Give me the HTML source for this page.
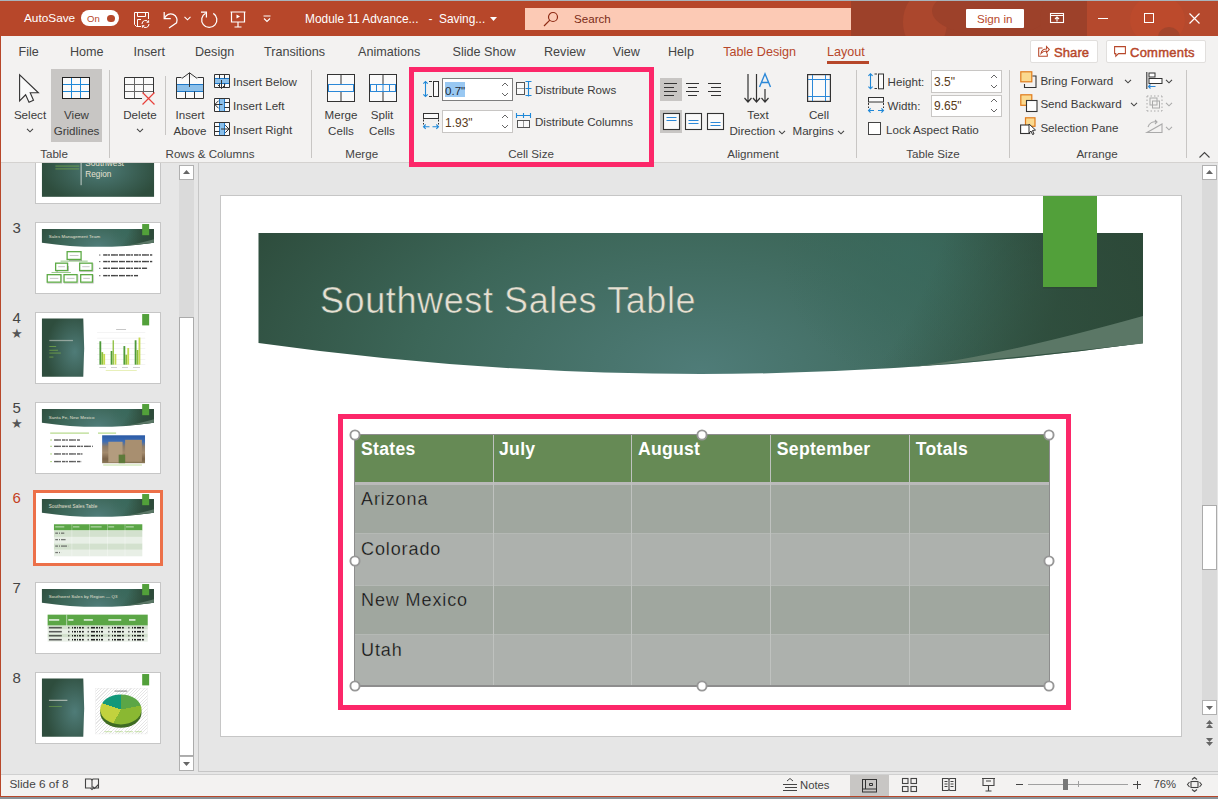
<!DOCTYPE html>
<html><head><meta charset="utf-8">
<style>
*{box-sizing:border-box;margin:0;padding:0}
html,body{width:1218px;height:799px;overflow:hidden;background:#E6E6E6;font-family:"Liberation Sans",sans-serif;color:#444}
.a{position:absolute}
.t{position:absolute;white-space:nowrap;line-height:1}
svg{position:absolute;overflow:visible}
#titlebar{left:0;top:0;width:1218px;height:36px;background:#B7472A;overflow:hidden}
#tabs{left:0;top:36px;width:1218px;height:127px;background:#F3F2F1;border-bottom:1px solid #D4D2D0}
.tab{font-size:12.8px;color:#444;top:45px}
.rb{font-size:12px;color:#3b3b3b}
.gl{font-size:12px;color:#555;top:148px}
.sep{position:absolute;width:1px;background:#C8C6C4}
.spin{position:absolute;background:#fff;border:1px solid #C8C6C4}
</style></head><body>
<div class="a" style="left:0;top:0;width:1218px;height:1px;background:#A8B4BC;z-index:5"></div>
<div id="titlebar" class="a">
<div class="t" style="left:24px;top:13px;font-size:11.8px;color:#fff">AutoSave</div>
<div class="a" style="left:81px;top:10px;width:38px;height:16px;border-radius:8px;background:#fff"></div>
<div class="t" style="left:87px;top:13.5px;font-size:9.5px;color:#B7472A">On</div>
<div class="a" style="left:107.3px;top:14.6px;width:7.4px;height:7.4px;border-radius:50%;background:#B7472A"></div>
<!-- save icon -->
<svg style="left:134px;top:12px" width="17" height="17" viewBox="0 0 17 17" fill="none" stroke="#fff" stroke-width="1">
<path d="M7 14.5H2.5L0.5 12.5V0.5H14.5V7"/><path d="M3.5 0.5V4.5H11.5V0.5"/><path d="M3.5 14V7.5H7"/>
<path d="M8 12A3.5 3.5 0 0 1 14.6 10.3M15 12A3.5 3.5 0 0 1 8.4 13.7"/><path d="M14.6 8.3V10.3H12.6M8.4 15.7V13.7H10.4"/>
</svg>
<!-- undo -->
<svg style="left:163px;top:11px" width="17" height="18" viewBox="0 0 17 18" fill="none" stroke="#fff" stroke-width="1.25">
<path d="M1.2 0.9V7.5H7.8"/><path d="M1.8 6.8A5.9 5.9 0 0 1 13.6 11.8L6 17"/>
</svg>
<svg style="left:184px;top:16px" width="7" height="5" viewBox="0 0 7 5" fill="none" stroke="#fff" stroke-width="1.1"><path d="M0.5 0.8l3 3 3-3"/></svg>
<!-- redo -->
<svg style="left:199px;top:11px" width="19" height="19" viewBox="0 0 19 19" fill="none" stroke="#fff" stroke-width="1.25">
<path d="M14.3 2.4A7.6 7.6 0 1 1 6.6 2.2"/><path d="M2 1.2H7.4V6.6"/>
</svg>
<!-- present -->
<svg style="left:230px;top:11px" width="16" height="17" viewBox="0 0 16 17" fill="none" stroke="#fff" stroke-width="1.2">
<path d="M0.5 1h15M1.5 1v10h13V1M8 11v5M4.5 16h7"/><path d="M6.5 3.5l3.5 2-3.5 2z" fill="#fff" stroke="none"/>
</svg>
<!-- customize -->
<svg style="left:263px;top:15px" width="8" height="8" viewBox="0 0 8 8" fill="none" stroke="#fff" stroke-width="1.1"><path d="M0.5 1h7M1 3.5l3 3 3-3"/></svg>
<div class="t" style="left:305px;top:13.5px;font-size:11.9px;color:#fff">Module 11 Advance...&nbsp;&nbsp;&nbsp;-&nbsp;&nbsp;Saving...</div>
<svg style="left:490px;top:17px" width="7" height="4" viewBox="0 0 7 4"><path d="M0 0h7L3.5 4z" fill="#fff"/></svg>
<!-- pattern -->
<div class="a" style="left:851px;top:0;width:236px;height:36px;background:#9D412A"></div>
<div class="a" style="left:903px;top:-8px;width:44px;height:60px;border-radius:50%;background:#AB472D"></div>
<div class="a" style="left:932px;top:-14px;width:120px;height:50px;border-radius:50%;background:#9D412A"></div>
<div class="a" style="left:1040px;top:-10px;width:50px;height:60px;border-radius:50%;background:#9D412A"></div>
<div class="a" style="left:1087px;top:0;width:131px;height:36px;background:#B5492D"></div>
<div class="a" style="left:1130px;top:-5px;width:55px;height:50px;border-radius:50%;background:#BC4A2C"></div>
<div class="a" style="left:1158px;top:27px;width:22px;height:20px;border-radius:50%;background:#A3452C"></div>
<!-- search -->
<div class="a" style="left:525px;top:8px;width:326px;height:22px;background:#FCCAB5"></div>
<svg style="left:543px;top:11px" width="16" height="16" viewBox="0 0 16 16" fill="none" stroke="#8E2B15" stroke-width="1.2">
<circle cx="10" cy="6" r="4.5"/><path d="M6.8 9.2L1 15"/>
</svg>
<div class="t" style="left:574px;top:13px;font-size:11.6px;color:#7A2A17">Search</div>
<!-- sign in -->
<div class="a" style="left:966px;top:9px;width:58px;height:19px;background:#fff;border-radius:1px"></div>
<div class="t" style="left:977px;top:12.5px;font-size:11.6px;color:#B7472A">Sign in</div>
<svg style="left:1050px;top:13px" width="14" height="10" viewBox="0 0 14 10" fill="none" stroke="#fff" stroke-width="1.1">
<rect x="0.5" y="0.5" width="13" height="9"/><path d="M0.5 2.5h13M7 8.5V4M5 6l2-2 2 2"/>
</svg>
<div class="a" style="left:1098px;top:18px;width:10px;height:1px;background:#fff"></div>
<div class="a" style="left:1144px;top:13px;width:10px;height:10px;border:1px solid #fff"></div>
<svg style="left:1189px;top:13px" width="11" height="11" viewBox="0 0 11 11" stroke="#fff" stroke-width="1.2"><path d="M0.5 0.5l10 10M10.5 0.5l-10 10"/></svg>
</div>
<div id="tabs" class="a"></div>
<div id="ribbon">
<div class="t" style="left:18.5px;top:46.3px;font-size:12.6px;color:#444;">File</div>
<div class="t" style="left:70px;top:46.3px;font-size:12.6px;color:#444;">Home</div>
<div class="t" style="left:133.5px;top:46.3px;font-size:12.6px;color:#444;">Insert</div>
<div class="t" style="left:195px;top:46.3px;font-size:12.6px;color:#444;">Design</div>
<div class="t" style="left:264px;top:46.3px;font-size:12.6px;color:#444;">Transitions</div>
<div class="t" style="left:358px;top:46.3px;font-size:12.6px;color:#444;">Animations</div>
<div class="t" style="left:452.5px;top:46.3px;font-size:12.6px;color:#444;">Slide Show</div>
<div class="t" style="left:544px;top:46.3px;font-size:12.6px;color:#444;">Review</div>
<div class="t" style="left:612.8px;top:46.3px;font-size:12.6px;color:#444;">View</div>
<div class="t" style="left:668px;top:46.3px;font-size:12.6px;color:#444;">Help</div>
<div class="t" style="left:723.2px;top:46.3px;font-size:12.6px;color:#B7472A;">Table Design</div>
<div class="t" style="left:827px;top:46.3px;font-size:12.6px;color:#B7472A;">Layout</div>
<div class="a" style="left:827px;top:61px;width:42px;height:3px;background:#B7472A"></div>
<div class="a" style="left:1030px;top:39.5px;width:68px;height:23.5px;background:#fff;border:1px solid #E1DFDD;border-radius:2px"></div>
<svg style="left:1038px;top:45px" width="12" height="12" viewBox="0 0 12 12" fill="none" stroke="#B7472A" stroke-width="1.05"><path d="M4.5 3H0.7v8.3h8.6V8.5"/><path d="M3 8.5C3.5 5.5 5.5 4 8.5 4V1.5L11.3 4.6 8.5 7.7V6C6 6 4.5 6.8 3 8.5z"/></svg>
<div class="t" style="left:1054px;top:45.6px;font-size:13px;color:#B7472A;-webkit-text-stroke:0.45px #B7472A;letter-spacing:0.1px">Share</div>
<div class="a" style="left:1106px;top:39.5px;width:100px;height:23.5px;background:#fff;border:1px solid #E1DFDD;border-radius:2px"></div>
<svg style="left:1114px;top:46px" width="12" height="11" viewBox="0 0 12 11" fill="none" stroke="#B7472A" stroke-width="1.05"><path d="M0.6 0.6h10.8v7H4.5L1.8 10.2V7.6H0.6z"/></svg>
<div class="t" style="left:1130px;top:45.6px;font-size:13px;color:#B7472A;-webkit-text-stroke:0.45px #B7472A;letter-spacing:0.25px">Comments</div>
<div class="a" style="left:51px;top:69px;width:51px;height:73px;background:#C8C6C4"></div>
<svg style="left:19px;top:74px" width="22" height="29" viewBox="0 0 22 29"><path d="M0.6 0.8V26.8L6.6 20.8 10 28.2 14.5 26.2 11.2 18.8H19.4z" fill="#fafafa" stroke="#333" stroke-width="1.1" stroke-linejoin="miter"/></svg>
<svg style="left:62px;top:77px" width="28" height="22" viewBox="0 0 28 22"><rect x="0.5" y="0.5" width="27" height="21" fill="#fafafa" stroke="#222" stroke-width="1"/><path d="M1 7.5h26M1 14.5h26M9.5 1v20M18.5 1v20" stroke="#1E88D8" stroke-width="1"/></svg>
<div class="t" style="left:-30px;width:120px;text-align:center;top:109.4px;font-size:11.6px;color:#3b3b3b;">Select</div>
<svg style="left:26px;top:128px" width="8" height="5" viewBox="0 0 8 5" fill="none" stroke="#444" stroke-width="1.1"><path d="M1 0.8l3 3 3-3"/></svg>
<div class="t" style="left:16.5px;width:120px;text-align:center;top:109.2px;font-size:11.6px;color:#3b3b3b;">View</div>
<div class="t" style="left:16.5px;width:120px;text-align:center;top:124.7px;font-size:11.6px;color:#3b3b3b;">Gridlines</div>
<div class="t" style="left:-6px;width:120px;text-align:center;top:147.7px;font-size:11.6px;color:#444;">Table</div>
<div class="sep" style="left:109px;top:70px;height:88px"></div>
<svg style="left:124px;top:77px" width="33" height="28" viewBox="0 0 33 28"><path d="M0.5 0.5h29v21h-29z" fill="#fafafa" stroke="#333" stroke-width="1"/><path d="M1 7.5h28M1 14.5h28M10.5 1v20M19.5 1v20" stroke="#666" stroke-width="1"/><path d="M18 16h12v8h-12z" fill="#F3F2F1"/><path d="M18.5 15.5l12 12M30.5 15.5l-12 12" stroke="#E8403A" stroke-width="1.2"/></svg>
<div class="t" style="left:80px;width:120px;text-align:center;top:108.8px;font-size:11.6px;color:#3b3b3b;">Delete</div>
<svg style="left:136px;top:128px" width="8" height="5" viewBox="0 0 8 5" fill="none" stroke="#444" stroke-width="1.1"><path d="M1 0.8l3 3 3-3"/></svg>
<div class="sep" style="left:165px;top:76px;height:59px"></div>
<svg style="left:176px;top:72px" width="29" height="28" viewBox="0 0 29 28"><rect x="0.5" y="5.5" width="27" height="21" fill="#fafafa"/><rect x="1" y="12.5" width="26" height="7" fill="#8CC0EA"/><path d="M0.5 12.5h27M0.5 19.5h27" stroke="#1E78C8" stroke-width="1"/><path d="M5.5 5.5H0.5V26.5H27.5V5.5H21.5M9.5 19.5v7M18.5 19.5v7" fill="none" stroke="#333" stroke-width="1"/><path d="M13.5 0.8V15M5.8 6.5L13.5 0.8 21.2 6.5" fill="none" stroke="#333" stroke-width="1"/></svg>
<div class="t" style="left:130px;width:120px;text-align:center;top:108.8px;font-size:11.6px;color:#3b3b3b;">Insert</div>
<div class="t" style="left:130px;width:120px;text-align:center;top:124.7px;font-size:11.6px;color:#3b3b3b;">Above</div>
<svg style="left:214px;top:74px" width="17" height="16" viewBox="0 0 17 16"><rect x="0.5" y="0.5" width="15" height="13" fill="#fafafa"/><rect x="1" y="4.5" width="14" height="5" fill="#8CC0EA"/><path d="M0.5 4.5h15M0.5 9.5h15" stroke="#1E78C8" stroke-width="1"/><path d="M0.5 0.5h15v13h-15zM5.5 0.5v4M10.5 0.5v4M5.5 9.5v4M10.5 9.5v4" fill="none" stroke="#333" stroke-width="1"/><path d="M7.5 6V14.5M3.8 10.8L7.5 14.5 11.2 10.8" fill="none" stroke="#333" stroke-width="1"/></svg>
<div class="t" style="left:233px;top:76.4px;font-size:11.6px;color:#3b3b3b;">Insert Below</div>
<svg style="left:214px;top:98px" width="17" height="15" viewBox="0 0 17 15"><rect x="0.5" y="0.5" width="15" height="13" fill="#fafafa"/><rect x="5.5" y="1" width="5" height="12" fill="#8CC0EA"/><path d="M5.5 0.5v13M10.5 0.5v13" stroke="#1E78C8" stroke-width="1"/><path d="M0.5 0.5h15v13h-15zM10.5 4.5h5M10.5 9.5h5" fill="none" stroke="#333" stroke-width="1"/><path d="M1 6.5H8.5M4.6 2.7L0.8 6.5 4.6 10.3" fill="none" stroke="#333" stroke-width="1"/></svg>
<div class="t" style="left:233px;top:100.2px;font-size:11.6px;color:#3b3b3b;">Insert Left</div>
<svg style="left:214px;top:122px" width="17" height="15" viewBox="0 0 17 15"><rect x="0.5" y="0.5" width="15" height="13" fill="#fafafa"/><rect x="5.5" y="1" width="5" height="12" fill="#8CC0EA"/><path d="M5.5 0.5v13M10.5 0.5v13" stroke="#1E78C8" stroke-width="1"/><path d="M0.5 0.5h15v13h-15zM0.5 4.5h5M0.5 9.5h5" fill="none" stroke="#333" stroke-width="1"/><path d="M7 7H15M11.2 3.2L15 7 11.2 10.8" fill="none" stroke="#333" stroke-width="1"/></svg>
<div class="t" style="left:233px;top:124.2px;font-size:11.6px;color:#3b3b3b;">Insert Right</div>
<div class="t" style="left:150px;width:120px;text-align:center;top:147.7px;font-size:11.6px;color:#444;">Rows &amp; Columns</div>
<div class="sep" style="left:311px;top:70px;height:88px"></div>
<svg style="left:327px;top:74px" width="28" height="28" viewBox="0 0 28 28"><rect x="0.5" y="0.5" width="27" height="27" fill="#fafafa" stroke="#333" stroke-width="1"/><path d="M14 1v9M14 18v9.5" stroke="#333" stroke-width="1"/><rect x="1.5" y="10.5" width="25" height="7" fill="#fafafa" stroke="#2B88D8" stroke-width="1"/></svg>
<div class="t" style="left:281px;width:120px;text-align:center;top:108.8px;font-size:11.6px;color:#3b3b3b;">Merge</div>
<div class="t" style="left:281px;width:120px;text-align:center;top:124.7px;font-size:11.6px;color:#3b3b3b;">Cells</div>
<svg style="left:369px;top:74px" width="28" height="28" viewBox="0 0 28 28"><rect x="0.5" y="0.5" width="27" height="27" fill="#fafafa" stroke="#333" stroke-width="1"/><path d="M14 1v9M14 18v9.5" stroke="#333" stroke-width="1"/><rect x="1.5" y="10.5" width="25" height="7" fill="#fafafa" stroke="#2B88D8" stroke-width="1"/><path d="M7.5 10.5v7M14 10.5v7M20.5 10.5v7" stroke="#2B88D8" stroke-width="1"/></svg>
<div class="t" style="left:322px;width:120px;text-align:center;top:108.8px;font-size:11.6px;color:#3b3b3b;">Split</div>
<div class="t" style="left:322px;width:120px;text-align:center;top:124.7px;font-size:11.6px;color:#3b3b3b;">Cells</div>
<div class="t" style="left:301.7px;width:120px;text-align:center;top:147.7px;font-size:11.6px;color:#444;">Merge</div>
<svg style="left:422px;top:80px" width="18" height="18" viewBox="0 0 18 18"><path d="M3.5 1.5v15M1.3 3.7L3.5 1.5 5.7 3.7M1.3 14.3L3.5 16.5 5.7 14.3" fill="none" stroke="#1E88D8" stroke-width="1.1"/><path d="M7 1.5h3M7 16.5h3" stroke="#333" stroke-width="1"/><rect x="11.5" y="1.5" width="5" height="15" fill="#fafafa" stroke="#333" stroke-width="1"/></svg>
<div class="spin" style="left:442px;top:78px;width:71px;height:23px;border-color:#7E7E7E"></div>
<div class="a" style="left:445px;top:82px;width:20px;height:15px;background:#99C8F2"></div>
<div class="t" style="left:445px;top:85.2px;font-size:11.6px;color:#1F2A36;">0.7&quot;</div>
<svg style="left:501px;top:81px" width="8" height="17" viewBox="0 0 8 17" fill="none" stroke="#555" stroke-width="0.9"><path d="M1 5l3-3 3 3M1 12l3 3 3-3"/></svg>
<svg style="left:422px;top:112px" width="18" height="18" viewBox="0 0 18 18"><rect x="1.5" y="1.5" width="15" height="5" fill="#fafafa" stroke="#333" stroke-width="1"/><path d="M1.5 7.5v2M1.5 11v1.5M16.5 7.5v2M16.5 11v1.5" stroke="#333" stroke-width="1"/><path d="M1.5 14.7h6M10.5 14.7h6M3.7 12.5L1.5 14.7 3.7 16.9M14.3 12.5l2.2 2.2-2.2 2.2" fill="none" stroke="#1E88D8" stroke-width="1.1"/></svg>
<div class="spin" style="left:442px;top:110px;width:71px;height:23px"></div>
<div class="t" style="left:445px;top:116.8px;font-size:12px;color:#5a3b1a;">1.93&quot;</div>
<svg style="left:501px;top:113px" width="8" height="17" viewBox="0 0 8 17" fill="none" stroke="#555" stroke-width="0.9"><path d="M1 5l3-3 3 3M1 12l3 3 3-3"/></svg>
<svg style="left:515px;top:80px" width="17" height="17" viewBox="0 0 17 17"><rect x="1.5" y="2.5" width="8" height="12" fill="#fafafa" stroke="#555" stroke-width="1"/><path d="M2 8.5h7" stroke="#999" stroke-width="1"/><path d="M13.5 1.5v15M10.5 1.5h6M10.5 8.5h6M10.5 15.5h6" fill="none" stroke="#1E88D8" stroke-width="1.1"/></svg>
<div class="t" style="left:535px;top:84.2px;font-size:11.6px;color:#3b3b3b;">Distribute Rows</div>
<svg style="left:515px;top:112px" width="17" height="17" viewBox="0 0 17 17"><rect x="2.5" y="8.5" width="12" height="7" fill="#fafafa" stroke="#555" stroke-width="1"/><path d="M8.5 9v6" stroke="#999" stroke-width="1"/><path d="M1 3.5h15M1.5 1v5M8.5 1v5M15.5 1v5" fill="none" stroke="#1E88D8" stroke-width="1.1"/></svg>
<div class="t" style="left:535px;top:115.7px;font-size:11.6px;color:#3b3b3b;">Distribute Columns</div>
<div class="t" style="left:471px;width:120px;text-align:center;top:147.7px;font-size:11.6px;color:#444;">Cell Size</div>
<div class="a" style="left:409px;top:67px;width:245px;height:100px;border:5px solid #FC2769;z-index:3"></div>
<div class="a" style="left:660px;top:78px;width:22px;height:23px;background:#C8C6C4"></div>
<svg style="left:663px;top:81px" width="15" height="16" viewBox="0 0 15 16" stroke="#333" stroke-width="1"><path d="M1 2.5h13M1 6.5h10M1 10.5h13M1 14.5h10"/></svg>
<svg style="left:685px;top:81px" width="15" height="16" viewBox="0 0 15 16" stroke="#333" stroke-width="1"><path d="M1 2.5h13M3 6.5h9M1 10.5h13M3 14.5h9"/></svg>
<svg style="left:707px;top:81px" width="15" height="16" viewBox="0 0 15 16" stroke="#333" stroke-width="1"><path d="M1 2.5h13M4 6.5h10M1 10.5h13M4 14.5h10"/></svg>
<div class="a" style="left:660px;top:110px;width:22px;height:23px;background:#C8C6C4"></div>
<svg style="left:663px;top:113px" width="17" height="17" viewBox="0 0 17 17"><rect x="0.5" y="0.5" width="16" height="16" fill="#fafafa" stroke="#333" stroke-width="1.1"/><path d="M3.5 4.5h10M3.5 7.5h10" stroke="#2B88D8" stroke-width="1"/></svg>
<svg style="left:685px;top:113px" width="17" height="17" viewBox="0 0 17 17"><rect x="0.5" y="0.5" width="16" height="16" fill="#fafafa" stroke="#333" stroke-width="1.1"/><path d="M3.5 7.5h10M3.5 10.5h10" stroke="#2B88D8" stroke-width="1"/></svg>
<svg style="left:707px;top:113px" width="17" height="17" viewBox="0 0 17 17"><rect x="0.5" y="0.5" width="16" height="16" fill="#fafafa" stroke="#333" stroke-width="1.1"/><path d="M3.5 9.5h10M3.5 12.5h10" stroke="#2B88D8" stroke-width="1"/></svg>
<svg style="left:744px;top:73px" width="28" height="30" viewBox="0 0 28 30" fill="none" stroke-width="1.2"><path d="M4 1v28M0.5 25l3.5 4 3.5-4M12.5 1v28M9 25l3.5 4 3.5-4M21 16v13M17.5 25l3.5 4 3.5-4" stroke="#333"/><path d="M15.5 14L21 0.8 26.5 14M17.5 9.5h7" stroke="#2B88D8" stroke-width="1.4"/></svg>
<div class="t" style="left:698px;width:120px;text-align:center;top:108.8px;font-size:11.6px;color:#3b3b3b;">Text</div>
<div class="t" style="left:729.5px;top:124.7px;font-size:11.6px;color:#3b3b3b;">Direction</div>
<svg style="left:778px;top:129.5px" width="8" height="5" viewBox="0 0 8 5" fill="none" stroke="#444" stroke-width="1.1"><path d="M1 0.8l3 3 3-3"/></svg>
<svg style="left:807px;top:74px" width="24" height="28" viewBox="0 0 24 28"><rect x="0.6" y="0.6" width="22.8" height="26.8" fill="#fafafa" stroke="#333" stroke-width="1.2"/><path d="M5.5 1v26M18.5 1v26M1 5.5h22M1 22.5h22" stroke="#2B88D8" stroke-width="1"/></svg>
<div class="t" style="left:759px;width:120px;text-align:center;top:108.8px;font-size:11.6px;color:#3b3b3b;">Cell</div>
<div class="t" style="left:792.5px;top:124.7px;font-size:11.6px;color:#3b3b3b;">Margins</div>
<svg style="left:837px;top:129.5px" width="8" height="5" viewBox="0 0 8 5" fill="none" stroke="#444" stroke-width="1.1"><path d="M1 0.8l3 3 3-3"/></svg>
<div class="t" style="left:693px;width:120px;text-align:center;top:147.7px;font-size:11.6px;color:#444;">Alignment</div>
<div class="sep" style="left:856px;top:70px;height:88px"></div>
<svg style="left:867px;top:73px" width="18" height="17" viewBox="0 0 18 17"><path d="M3.5 0.8v15M1.4 2.9L3.5 0.8 5.6 2.9M1.4 13.7L3.5 15.8 5.6 13.7" fill="none" stroke="#1E88D8" stroke-width="1.1"/><path d="M7.5 1h2.5M7.5 15.5h2.5" stroke="#333" stroke-width="1"/><rect x="11.5" y="1" width="5" height="14.8" fill="#fafafa" stroke="#333" stroke-width="1"/></svg>
<div class="t" style="left:887.6px;top:76.2px;font-size:11.6px;color:#3b3b3b;">Height:</div>
<div class="spin" style="left:931px;top:70px;width:71px;height:23px"></div>
<div class="t" style="left:934px;top:76.3px;font-size:12px;color:#5a3b1a;">3.5&quot;</div>
<svg style="left:990px;top:73px" width="8" height="17" viewBox="0 0 8 17" fill="none" stroke="#555" stroke-width="0.9"><path d="M1 5l3-3 3 3M1 12l3 3 3-3"/></svg>
<svg style="left:867px;top:96px" width="18" height="17" viewBox="0 0 18 17"><rect x="1.5" y="1.5" width="15" height="4.5" fill="#fafafa" stroke="#333" stroke-width="1"/><path d="M1.5 7v2M1.5 10.5v1.5M16.5 7v2M16.5 10.5v1.5" stroke="#333" stroke-width="1"/><path d="M1.5 14.5h5.5M11 14.5h5.5M3.6 12.4L1.5 14.5 3.6 16.6M14.4 12.4l2.1 2.1-2.1 2.1" fill="none" stroke="#1E88D8" stroke-width="1.1"/></svg>
<div class="t" style="left:887.6px;top:100.2px;font-size:11.6px;color:#3b3b3b;">Width:</div>
<div class="spin" style="left:931px;top:94.5px;width:71px;height:22px"></div>
<div class="t" style="left:934px;top:100.3px;font-size:12px;color:#5a3b1a;">9.65&quot;</div>
<svg style="left:990px;top:97px" width="8" height="17" viewBox="0 0 8 17" fill="none" stroke="#555" stroke-width="0.9"><path d="M1 5l3-3 3 3M1 12l3 3 3-3"/></svg>
<div class="a" style="left:868px;top:122px;width:13px;height:13px;border:1px solid #444;background:#fff"></div>
<div class="t" style="left:886px;top:124.2px;font-size:11.6px;color:#3b3b3b;">Lock Aspect Ratio</div>
<div class="t" style="left:873px;width:120px;text-align:center;top:147.7px;font-size:11.6px;color:#444;">Table Size</div>
<div class="sep" style="left:1009px;top:70px;height:88px"></div>
<svg style="left:1020px;top:71px" width="18" height="18" viewBox="0 0 18 18"><rect x="0.8" y="0.8" width="11" height="10" fill="#FAD98F" stroke="#E07B1A" stroke-width="1.2"/><path d="M12.5 5h3.5v11.5H4.5V13" fill="none" stroke="#333" stroke-width="1.1"/></svg>
<div class="t" style="left:1040.4px;top:75.4px;font-size:11.6px;color:#3b3b3b;">Bring Forward</div>
<svg style="left:1124px;top:78.5px" width="8" height="5" viewBox="0 0 8 5" fill="none" stroke="#444" stroke-width="1.1"><path d="M1 0.8l3 3 3-3"/></svg>
<svg style="left:1020px;top:94px" width="18" height="19" viewBox="0 0 18 19"><rect x="0.8" y="0.8" width="11" height="10.5" fill="#FAD98F" stroke="#E07B1A" stroke-width="1.2"/><rect x="6.5" y="6.5" width="10.5" height="11" fill="#fff" stroke="#333" stroke-width="1.1"/></svg>
<div class="t" style="left:1040.4px;top:98.2px;font-size:11.6px;color:#3b3b3b;">Send Backward</div>
<svg style="left:1130px;top:101.5px" width="8" height="5" viewBox="0 0 8 5" fill="none" stroke="#444" stroke-width="1.1"><path d="M1 0.8l3 3 3-3"/></svg>
<svg style="left:1020px;top:117px" width="18" height="18" viewBox="0 0 18 18"><rect x="5.5" y="0.8" width="9.5" height="8.5" fill="#FAD98F" stroke="#E07B1A" stroke-width="1.2"/><rect x="0.6" y="8" width="9" height="8.5" fill="#fff" stroke="#333" stroke-width="1.1"/><path d="M9 7l6.5 6-3 0.5 1.5 3.5-1.5 0.5-1.5-3.5L9 16z" fill="#fff" stroke="#333" stroke-width="1"/></svg>
<div class="t" style="left:1040.4px;top:121.7px;font-size:11.6px;color:#3b3b3b;">Selection Pane</div>
<svg style="left:1146px;top:72px" width="17" height="17" viewBox="0 0 17 17"><path d="M0.8 0v17" stroke="#333" stroke-width="1.1"/><rect x="3" y="1" width="6" height="4" fill="#fff" stroke="#333" stroke-width="1"/><rect x="3" y="6.5" width="13" height="5" fill="#fff" stroke="#333" stroke-width="1"/><path d="M2.5 14.5h7M4.5 12.5l-2 2 2 2" fill="none" stroke="#2B88D8" stroke-width="1.1"/></svg>
<svg style="left:1165px;top:78.5px" width="8" height="5" viewBox="0 0 8 5" fill="none" stroke="#444" stroke-width="1.1"><path d="M1 0.8l3 3 3-3"/></svg>
<svg style="left:1146px;top:95px" width="17" height="17" viewBox="0 0 17 17" fill="none" stroke="#aaa" stroke-width="1"><path d="M1 1v15M1 16h15M16 1v15M1 1h15" stroke-dasharray="1.5 2"/><rect x="4" y="3" width="7" height="7"/><rect x="6.5" y="6" width="7" height="7"/></svg>
<svg style="left:1165px;top:101.5px" width="8" height="5" viewBox="0 0 8 5" fill="none" stroke="#aaa" stroke-width="1.1"><path d="M1 0.8l3 3 3-3"/></svg>
<svg style="left:1146px;top:119px" width="17" height="14" viewBox="0 0 17 14" fill="none" stroke="#aaa" stroke-width="1.1"><path d="M1 13.5h15V5z M1 13.5"/><path d="M2 8c1-4 5-6 9-5M9 1l2 2-2 2"/></svg>
<svg style="left:1165px;top:125.5px" width="8" height="5" viewBox="0 0 8 5" fill="none" stroke="#aaa" stroke-width="1.1"><path d="M1 0.8l3 3 3-3"/></svg>
<div class="t" style="left:1037px;width:120px;text-align:center;top:147.7px;font-size:11.6px;color:#444;">Arrange</div>
<div class="sep" style="left:1186px;top:70px;height:88px"></div>
<svg style="left:1199px;top:152px" width="11" height="6" viewBox="0 0 11 6" fill="none" stroke="#444" stroke-width="1.1"><path d="M0.5 5.5l5-5 5 5"/></svg>
</div>
<div id="lower">
<div class="a" style="left:198px;top:163px;width:1px;height:609px;background:#C6C6C6"></div>
<div class="a" style="left:179px;top:165px;width:15px;height:606px;background:#DADADA"></div>
<div class="a" style="left:179px;top:165px;width:15px;height:15px;background:#fff;border:1px solid #B0B0B0"></div>
<svg style="left:183px;top:170px" width="7" height="4" viewBox="0 0 7 4"><path d="M0 4h7L3.5 0z" fill="#666"/></svg>
<div class="a" style="left:179px;top:317px;width:15px;height:439px;background:#fff;border:1px solid #ABABAB"></div>
<div class="a" style="left:179px;top:756px;width:15px;height:15px;background:#fff;border:1px solid #B0B0B0"></div>
<svg style="left:183px;top:762px" width="7" height="4" viewBox="0 0 7 4"><path d="M0 0h7L3.5 4z" fill="#666"/></svg>
<div class="a" style="left:1px;top:163px;width:178px;height:608px;overflow:hidden">
<div class="a" style="left:34px;top:-31px;width:126px;height:72px;background:#C6C6C6"></div><div class="a" style="left:35px;top:-30px;width:124px;height:70px;background:#fff;overflow:hidden"><div class="a" style="left:0;top:0;width:960px;height:540px;transform:scale(0.12917);transform-origin:0 0"><svg style="left:0;top:0" width="960" height="540" viewBox="0 0 960 540">
<defs><radialGradient id="s2" gradientUnits="userSpaceOnUse" cx="500" cy="280" r="460" gradientTransform="translate(500 280) scale(1 0.6) translate(-500 -280)">
<stop offset="0" stop-color="#4E7C78"/><stop offset="1" stop-color="#2E4D3D"/></radialGradient></defs>
<rect x="46" y="43" width="868" height="451" fill="url(#s2)"/>
<rect x="346" y="50" width="6" height="354" fill="#E8ECE8"/>
<rect x="150" y="252" width="185" height="8" fill="#8BC34A" opacity="0.55"/><rect x="150" y="274" width="185" height="8" fill="#8BC34A" opacity="0.55"/>
</svg>
<div class="t" style="left:381px;top:205px;font-size:64px;color:#E6E0D0">Southwest</div>
<div class="t" style="left:381px;top:285px;font-size:64px;color:#E6E0D0">Region</div>
</div></div>
</div>
<div class="a" style="left:35px;top:222px;width:126px;height:72px;background:#C6C6C6"></div>
<div class="a" style="left:36px;top:223px;width:124px;height:70px;background:#fff;overflow:hidden"><div class="a" style="left:0;top:0;width:960px;height:540px;transform:scale(0.12917);transform-origin:0 0"><svg style="left:0;top:0" width="960" height="540" viewBox="0 0 960 540">
<defs>
<radialGradient id="g1" gradientUnits="userSpaceOnUse" cx="480" cy="175" r="520" gradientTransform="translate(480 175) scale(1 0.55) translate(-480 -175)">
<stop offset="0" stop-color="#4F7C78"/><stop offset="0.55" stop-color="#3C6658"/><stop offset="1" stop-color="#2D4B3B"/>
</radialGradient>
<radialGradient id="g2" gradientUnits="userSpaceOnUse" cx="690" cy="58" r="130">
<stop offset="0" stop-color="#3A6A5E" stop-opacity="0.8"/><stop offset="1" stop-color="#3A6A5E" stop-opacity="0"/>
</radialGradient>
<radialGradient id="g3" gradientUnits="userSpaceOnUse" cx="300" cy="-100" r="720">
<stop offset="0.62" stop-color="#2C4837" stop-opacity="0"/><stop offset="0.8" stop-color="#2C4837" stop-opacity="0.72"/><stop offset="1" stop-color="#2C4837" stop-opacity="0.9"/>
</radialGradient>
</defs>
<path d="M45.7 45.7H913V152Q479.35 217.0 45.7 152Z" fill="url(#g1)"/>
<path d="M45.7 45.7H913V152Q479.35 217.0 45.7 152Z" fill="url(#g2)"/>
<path d="M45.7 45.7H913V152Q479.35 217.0 45.7 152Z" fill="url(#g3)"/>
<path d="M913 125Q770 165 681 176Q800 165 913 152.5Z" fill="#5B7766"/>
<rect x="822" y="8" width="54" height="87" fill="#52A03A"/>
<path d="M822 95h54v1.5h-54z" fill="#2a3a2a" opacity="0.35"/>
</svg>
<div class="t" style="left:99px;top:88.8px;font-size:34px;color:#E6E0D2;letter-spacing:0.6px;">Sales Management Team</div>
<div class="a" style="left:236px;top:217px;width:118px;height:70px;border:10px solid #5DAA45;background:#fff;box-shadow:4px 5px 6px rgba(0,0,0,0.3)"></div><div class="a" style="left:261px;top:248px;width:68px;height:7px;background:#999;opacity:0.6"></div><div class="a" style="left:147px;top:306px;width:102px;height:67px;border:10px solid #5DAA45;background:#fff;box-shadow:4px 5px 6px rgba(0,0,0,0.3)"></div><div class="a" style="left:172px;top:335px;width:52px;height:7px;background:#999;opacity:0.6"></div><div class="a" style="left:333px;top:306px;width:107px;height:67px;border:10px solid #5DAA45;background:#fff;box-shadow:4px 5px 6px rgba(0,0,0,0.3)"></div><div class="a" style="left:358px;top:335px;width:57px;height:7px;background:#999;opacity:0.6"></div><div class="a" style="left:82px;top:395px;width:116px;height:68px;border:10px solid #5DAA45;background:#fff;box-shadow:4px 5px 6px rgba(0,0,0,0.3)"></div><div class="a" style="left:107px;top:425px;width:66px;height:7px;background:#999;opacity:0.6"></div><div class="a" style="left:212px;top:395px;width:111px;height:68px;border:10px solid #5DAA45;background:#fff;box-shadow:4px 5px 6px rgba(0,0,0,0.3)"></div><div class="a" style="left:237px;top:425px;width:61px;height:7px;background:#999;opacity:0.6"></div><div class="a" style="left:341px;top:395px;width:101px;height:68px;border:10px solid #5DAA45;background:#fff;box-shadow:4px 5px 6px rgba(0,0,0,0.3)"></div><div class="a" style="left:366px;top:425px;width:51px;height:7px;background:#999;opacity:0.6"></div><div class="a" style="left:190px;top:292px;width:210px;height:6px;background:#5DAA45;opacity:0.8"></div><div class="a" style="left:120px;top:380px;width:150px;height:6px;background:#5DAA45;opacity:0.8"></div><div class="a" style="left:490px;top:244px;width:8px;height:8px;background:#333"></div><div class="a" style="left:520px;top:242px;width:380px;height:11px;background:repeating-linear-gradient(90deg,#222 0 30px,#888 30px 34px,#333 34px 52px,#fff 52px 60px);opacity:0.85"></div><div class="a" style="left:490px;top:295px;width:8px;height:8px;background:#333"></div><div class="a" style="left:520px;top:293px;width:380px;height:11px;background:repeating-linear-gradient(90deg,#222 0 30px,#888 30px 34px,#333 34px 52px,#fff 52px 60px);opacity:0.85"></div><div class="a" style="left:490px;top:347px;width:8px;height:8px;background:#333"></div><div class="a" style="left:520px;top:345px;width:340px;height:11px;background:repeating-linear-gradient(90deg,#222 0 30px,#888 30px 34px,#333 34px 52px,#fff 52px 60px);opacity:0.85"></div><div class="a" style="left:490px;top:404px;width:8px;height:8px;background:#333"></div><div class="a" style="left:520px;top:402px;width:270px;height:11px;background:repeating-linear-gradient(90deg,#222 0 30px,#888 30px 34px,#333 34px 52px,#fff 52px 60px);opacity:0.85"></div></div></div>
<div class="t" style="left:12.5px;top:219.7px;font-size:15px;color:#444">3</div>
<div class="a" style="left:35px;top:312px;width:126px;height:72px;background:#C6C6C6"></div>
<div class="a" style="left:36px;top:313px;width:124px;height:70px;background:#fff;overflow:hidden"><div class="a" style="left:0;top:0;width:960px;height:540px;transform:scale(0.12917);transform-origin:0 0"><svg style="left:0;top:0" width="960" height="540" viewBox="0 0 960 540">
<defs><radialGradient id="p1" gradientUnits="userSpaceOnUse" cx="300" cy="300" r="320" gradientTransform="translate(300 300) scale(0.7 1) translate(-300 -300)">
<stop offset="0" stop-color="#4F7C78"/><stop offset="1" stop-color="#2E4D3D"/></radialGradient></defs>
<path d="M46 43H366Q380 268 366 494H46Z" fill="url(#p1)"/>
<rect x="822" y="8" width="54" height="88" fill="#52A03A"/>
</svg>
<div class="a" style="left:103px;top:208px;width:183px;height:10px;background:#C9CFC6;opacity:0.6"></div><div class="a" style="left:103px;top:257px;width:53px;height:6px;background:#8BC34A;opacity:0.75"></div><div class="a" style="left:103px;top:285px;width:67px;height:6px;background:#8BC34A;opacity:0.75"></div><div class="a" style="left:103px;top:307px;width:89px;height:6px;background:#8BC34A;opacity:0.75"></div><div class="a" style="left:103px;top:338px;width:32px;height:6px;background:#8BC34A;opacity:0.75"></div><div class="a" style="left:620px;top:124px;width:77px;height:6px;background:#999;opacity:0.7"></div><div class="a" style="left:473px;top:150px;width:373px;height:2px;background:#D4D4D4"></div><div class="a" style="left:473px;top:193px;width:373px;height:2px;background:#D4D4D4"></div><div class="a" style="left:473px;top:236px;width:373px;height:2px;background:#D4D4D4"></div><div class="a" style="left:473px;top:275px;width:373px;height:2px;background:#D4D4D4"></div><div class="a" style="left:473px;top:319px;width:373px;height:2px;background:#D4D4D4"></div><div class="a" style="left:473px;top:360px;width:373px;height:2px;background:#D4D4D4"></div><div class="a" style="left:473px;top:399px;width:373px;height:2px;background:#D4D4D4"></div><div class="a" style="left:491px;top:219px;width:14px;height:181px;background:#4E9A3A"></div><div class="a" style="left:506px;top:303px;width:14px;height:97px;background:#8BBF3A"></div><div class="a" style="left:521px;top:317px;width:14px;height:83px;background:#C5D94F"></div><div class="a" style="left:578px;top:294px;width:14px;height:106px;background:#4E9A3A"></div><div class="a" style="left:593px;top:211px;width:10px;height:189px;background:#8BBF3A"></div><div class="a" style="left:608px;top:317px;width:14px;height:83px;background:#C5D94F"></div><div class="a" style="left:677px;top:256px;width:14px;height:144px;background:#4E9A3A"></div><div class="a" style="left:692px;top:323px;width:14px;height:77px;background:#8BBF3A"></div><div class="a" style="left:707px;top:271px;width:14px;height:129px;background:#C5D94F"></div><div class="a" style="left:764px;top:211px;width:14px;height:189px;background:#4E9A3A"></div><div class="a" style="left:779px;top:286px;width:14px;height:114px;background:#8BBF3A"></div><div class="a" style="left:794px;top:190px;width:14px;height:210px;background:#C5D94F"></div><div class="a" style="left:490px;top:419px;width:340px;height:5px;background:repeating-linear-gradient(90deg,#999 0 50px,transparent 50px 88px);opacity:0.7"></div><div class="a" style="left:540px;top:443px;width:240px;height:6px;background:#C5D94F;opacity:0.5"></div></div></div>
<div class="t" style="left:12.5px;top:309.7px;font-size:15px;color:#444">4</div>
<div class="t" style="left:10.5px;top:327.5px;font-size:12.5px;color:#555">&#9733;</div>
<div class="a" style="left:35px;top:402px;width:126px;height:72px;background:#C6C6C6"></div>
<div class="a" style="left:36px;top:403px;width:124px;height:70px;background:#fff;overflow:hidden"><div class="a" style="left:0;top:0;width:960px;height:540px;transform:scale(0.12917);transform-origin:0 0"><svg style="left:0;top:0" width="960" height="540" viewBox="0 0 960 540">
<defs>
<radialGradient id="g1" gradientUnits="userSpaceOnUse" cx="480" cy="175" r="520" gradientTransform="translate(480 175) scale(1 0.55) translate(-480 -175)">
<stop offset="0" stop-color="#4F7C78"/><stop offset="0.55" stop-color="#3C6658"/><stop offset="1" stop-color="#2D4B3B"/>
</radialGradient>
<radialGradient id="g2" gradientUnits="userSpaceOnUse" cx="690" cy="58" r="130">
<stop offset="0" stop-color="#3A6A5E" stop-opacity="0.8"/><stop offset="1" stop-color="#3A6A5E" stop-opacity="0"/>
</radialGradient>
<radialGradient id="g3" gradientUnits="userSpaceOnUse" cx="300" cy="-100" r="720">
<stop offset="0.62" stop-color="#2C4837" stop-opacity="0"/><stop offset="0.8" stop-color="#2C4837" stop-opacity="0.72"/><stop offset="1" stop-color="#2C4837" stop-opacity="0.9"/>
</radialGradient>
</defs>
<path d="M45.7 45.7H913V152Q479.35 217.0 45.7 152Z" fill="url(#g1)"/>
<path d="M45.7 45.7H913V152Q479.35 217.0 45.7 152Z" fill="url(#g2)"/>
<path d="M45.7 45.7H913V152Q479.35 217.0 45.7 152Z" fill="url(#g3)"/>
<path d="M913 125Q770 165 681 176Q800 165 913 152.5Z" fill="#5B7766"/>
<rect x="822" y="8" width="54" height="87" fill="#52A03A"/>
<path d="M822 95h54v1.5h-54z" fill="#2a3a2a" opacity="0.35"/>
</svg>
<div class="t" style="left:99px;top:96.2px;font-size:34px;color:#E6E0D2;letter-spacing:0.6px;">Santa Fe, New Mexico</div>
<div class="a" style="left:110px;top:229px;width:300px;height:8px;background:#8BC34A;opacity:0.75"></div><div class="a" style="left:480px;top:229px;width:140px;height:8px;background:#8BC34A;opacity:0.75"></div><div class="a" style="left:112px;top:282px;width:9px;height:9px;background:#8BC34A"></div><div class="a" style="left:140px;top:281px;width:200px;height:11px;background:repeating-linear-gradient(90deg,#333 0 30px,#999 30px 34px,#444 34px 50px,#fff 50px 58px);opacity:0.8"></div><div class="a" style="left:112px;top:331px;width:9px;height:9px;background:#8BC34A"></div><div class="a" style="left:140px;top:330px;width:300px;height:11px;background:repeating-linear-gradient(90deg,#333 0 30px,#999 30px 34px,#444 34px 50px,#fff 50px 58px);opacity:0.8"></div><div class="a" style="left:112px;top:390px;width:9px;height:9px;background:#8BC34A"></div><div class="a" style="left:140px;top:389px;width:220px;height:11px;background:repeating-linear-gradient(90deg,#333 0 30px,#999 30px 34px,#444 34px 50px,#fff 50px 58px);opacity:0.8"></div><div class="a" style="left:112px;top:449px;width:9px;height:9px;background:#8BC34A"></div><div class="a" style="left:140px;top:448px;width:210px;height:11px;background:repeating-linear-gradient(90deg,#333 0 30px,#999 30px 34px,#444 34px 50px,#fff 50px 58px);opacity:0.8"></div><div class="a" style="left:512px;top:250px;width:332px;height:216px;background:linear-gradient(#2A5AA6 0,#3D6DB5 22%,#8C7B68 40%,#A38A6C 62%,#7A6248 85%,#8A7A58 100%)"></div>
<div class="a" style="left:560px;top:300px;width:110px;height:160px;background:#B39C7E"></div><div class="a" style="left:690px;top:285px;width:130px;height:170px;background:#A88F70"></div><div class="a" style="left:640px;top:400px;width:50px;height:66px;background:#5E7A3A"></div>
<div class="a" style="left:520px;top:476px;width:300px;height:8px;background:#8BC34A;opacity:0.5"></div></div></div>
<div class="t" style="left:12.5px;top:399.7px;font-size:15px;color:#444">5</div>
<div class="t" style="left:10.5px;top:417.5px;font-size:12.5px;color:#555">&#9733;</div>
<div class="a" style="left:33px;top:490px;width:130px;height:76px;border:3px solid #EC7049"></div>
<div class="a" style="left:36px;top:493px;width:124px;height:70px;background:#fff;overflow:hidden"><div class="a" style="left:0;top:0;width:960px;height:540px;transform:scale(0.12917);transform-origin:0 0"><svg style="left:0;top:0" width="960" height="540" viewBox="0 0 960 540">
<defs>
<radialGradient id="g1" gradientUnits="userSpaceOnUse" cx="480" cy="175" r="520" gradientTransform="translate(480 175) scale(1 0.55) translate(-480 -175)">
<stop offset="0" stop-color="#4F7C78"/><stop offset="0.55" stop-color="#3C6658"/><stop offset="1" stop-color="#2D4B3B"/>
</radialGradient>
<radialGradient id="g2" gradientUnits="userSpaceOnUse" cx="690" cy="58" r="130">
<stop offset="0" stop-color="#3A6A5E" stop-opacity="0.8"/><stop offset="1" stop-color="#3A6A5E" stop-opacity="0"/>
</radialGradient>
<radialGradient id="g3" gradientUnits="userSpaceOnUse" cx="300" cy="-100" r="720">
<stop offset="0.62" stop-color="#2C4837" stop-opacity="0"/><stop offset="0.8" stop-color="#2C4837" stop-opacity="0.72"/><stop offset="1" stop-color="#2C4837" stop-opacity="0.9"/>
</radialGradient>
</defs>
<path d="M45.7 45.7H913V152Q479.35 217.0 45.7 152Z" fill="url(#g1)"/>
<path d="M45.7 45.7H913V152Q479.35 217.0 45.7 152Z" fill="url(#g2)"/>
<path d="M45.7 45.7H913V152Q479.35 217.0 45.7 152Z" fill="url(#g3)"/>
<path d="M913 125Q770 165 681 176Q800 165 913 152.5Z" fill="#5B7766"/>
<rect x="822" y="8" width="54" height="87" fill="#52A03A"/>
<path d="M822 95h54v1.5h-54z" fill="#2a3a2a" opacity="0.35"/>
</svg>
<div class="t" style="left:99px;top:87.1px;font-size:36px;color:#E6E0D2;letter-spacing:0.6px;">Southwest Sales Table</div>
<div class="a" style="left:139px;top:242px;width:684px;height:48px;background:#5BA646"></div><div class="a" style="left:139px;top:290px;width:684px;height:50px;background:#D3E1CE"></div><div class="a" style="left:139px;top:340px;width:684px;height:50px;background:#E8EFE6"></div><div class="a" style="left:139px;top:390px;width:684px;height:50px;background:#D3E1CE"></div><div class="a" style="left:139px;top:440px;width:684px;height:50px;background:#E8EFE6"></div><div class="a" style="left:276px;top:242px;width:4px;height:248px;background:#fff;opacity:0.6"></div><div class="a" style="left:413px;top:242px;width:4px;height:248px;background:#fff;opacity:0.6"></div><div class="a" style="left:550px;top:242px;width:4px;height:248px;background:#fff;opacity:0.6"></div><div class="a" style="left:687px;top:242px;width:4px;height:248px;background:#fff;opacity:0.6"></div><div class="a" style="left:149px;top:257px;width:70px;height:10px;background:#fff;opacity:0.5"></div><div class="a" style="left:286px;top:257px;width:50px;height:10px;background:#fff;opacity:0.5"></div><div class="a" style="left:423px;top:257px;width:85px;height:10px;background:#fff;opacity:0.5"></div><div class="a" style="left:560px;top:257px;width:45px;height:10px;background:#fff;opacity:0.5"></div><div class="a" style="left:697px;top:257px;width:60px;height:10px;background:#fff;opacity:0.5"></div><div class="a" style="left:149px;top:306px;width:70px;height:10px;background:repeating-linear-gradient(90deg,#444 0 10px,transparent 10px 14px);opacity:0.7"></div><div class="a" style="left:149px;top:356px;width:80px;height:10px;background:repeating-linear-gradient(90deg,#444 0 10px,transparent 10px 14px);opacity:0.7"></div><div class="a" style="left:149px;top:406px;width:100px;height:10px;background:repeating-linear-gradient(90deg,#444 0 10px,transparent 10px 14px);opacity:0.7"></div><div class="a" style="left:149px;top:456px;width:45px;height:10px;background:repeating-linear-gradient(90deg,#444 0 10px,transparent 10px 14px);opacity:0.7"></div></div></div>
<div class="t" style="left:12.5px;top:489.7px;font-size:15px;color:#C43E1C">6</div>
<div class="a" style="left:35px;top:582px;width:126px;height:72px;background:#C6C6C6"></div>
<div class="a" style="left:36px;top:583px;width:124px;height:70px;background:#fff;overflow:hidden"><div class="a" style="left:0;top:0;width:960px;height:540px;transform:scale(0.12917);transform-origin:0 0"><svg style="left:0;top:0" width="960" height="540" viewBox="0 0 960 540">
<defs>
<radialGradient id="g1" gradientUnits="userSpaceOnUse" cx="480" cy="175" r="520" gradientTransform="translate(480 175) scale(1 0.55) translate(-480 -175)">
<stop offset="0" stop-color="#4F7C78"/><stop offset="0.55" stop-color="#3C6658"/><stop offset="1" stop-color="#2D4B3B"/>
</radialGradient>
<radialGradient id="g2" gradientUnits="userSpaceOnUse" cx="690" cy="58" r="130">
<stop offset="0" stop-color="#3A6A5E" stop-opacity="0.8"/><stop offset="1" stop-color="#3A6A5E" stop-opacity="0"/>
</radialGradient>
<radialGradient id="g3" gradientUnits="userSpaceOnUse" cx="300" cy="-100" r="720">
<stop offset="0.62" stop-color="#2C4837" stop-opacity="0"/><stop offset="0.8" stop-color="#2C4837" stop-opacity="0.72"/><stop offset="1" stop-color="#2C4837" stop-opacity="0.9"/>
</radialGradient>
</defs>
<path d="M45.7 45.7H913V152Q479.35 217.0 45.7 152Z" fill="url(#g1)"/>
<path d="M45.7 45.7H913V152Q479.35 217.0 45.7 152Z" fill="url(#g2)"/>
<path d="M45.7 45.7H913V152Q479.35 217.0 45.7 152Z" fill="url(#g3)"/>
<path d="M913 125Q770 165 681 176Q800 165 913 152.5Z" fill="#5B7766"/>
<rect x="822" y="8" width="54" height="87" fill="#52A03A"/>
<path d="M822 95h54v1.5h-54z" fill="#2a3a2a" opacity="0.35"/>
</svg>
<div class="t" style="left:99px;top:88.8px;font-size:34px;color:#E6E0D2;letter-spacing:0.6px;">Southwest Sales by Region &mdash; Q3</div>
<div class="a" style="left:90px;top:245px;width:775px;height:85px;background:#5BA646"></div><div class="a" style="left:235px;top:245px;width:6px;height:210px;background:#fff;opacity:0.7"></div><div class="a" style="left:100px;top:280px;width:80px;height:12px;background:#fff;opacity:0.85"></div><div class="a" style="left:250px;top:280px;width:40px;height:12px;background:#fff;opacity:0.85"></div><div class="a" style="left:370px;top:280px;width:70px;height:12px;background:#fff;opacity:0.85"></div><div class="a" style="left:560px;top:280px;width:100px;height:12px;background:#fff;opacity:0.85"></div><div class="a" style="left:720px;top:280px;width:50px;height:12px;background:#fff;opacity:0.85"></div><div class="a" style="left:90px;top:330px;width:775px;height:31px;background:#D3E1CE"></div><div class="a" style="left:100px;top:340px;width:100px;height:12px;background:#2a2a2a;opacity:0.75"></div><div class="a" style="left:250px;top:340px;width:8px;height:12px;background:#222"></div><div class="a" style="left:275px;top:340px;width:95px;height:12px;background:repeating-linear-gradient(90deg,#222 0 14px,transparent 14px 20px)"></div><div class="a" style="left:400px;top:340px;width:8px;height:12px;background:#222"></div><div class="a" style="left:425px;top:340px;width:95px;height:12px;background:repeating-linear-gradient(90deg,#222 0 14px,transparent 14px 20px)"></div><div class="a" style="left:560px;top:340px;width:8px;height:12px;background:#222"></div><div class="a" style="left:585px;top:340px;width:95px;height:12px;background:repeating-linear-gradient(90deg,#222 0 14px,transparent 14px 20px)"></div><div class="a" style="left:715px;top:340px;width:8px;height:12px;background:#222"></div><div class="a" style="left:740px;top:340px;width:95px;height:12px;background:repeating-linear-gradient(90deg,#222 0 14px,transparent 14px 20px)"></div><div class="a" style="left:90px;top:361px;width:775px;height:31px;background:#E8EFE6"></div><div class="a" style="left:100px;top:371px;width:100px;height:12px;background:#2a2a2a;opacity:0.75"></div><div class="a" style="left:250px;top:371px;width:8px;height:12px;background:#222"></div><div class="a" style="left:275px;top:371px;width:95px;height:12px;background:repeating-linear-gradient(90deg,#222 0 14px,transparent 14px 20px)"></div><div class="a" style="left:400px;top:371px;width:8px;height:12px;background:#222"></div><div class="a" style="left:425px;top:371px;width:95px;height:12px;background:repeating-linear-gradient(90deg,#222 0 14px,transparent 14px 20px)"></div><div class="a" style="left:560px;top:371px;width:8px;height:12px;background:#222"></div><div class="a" style="left:585px;top:371px;width:95px;height:12px;background:repeating-linear-gradient(90deg,#222 0 14px,transparent 14px 20px)"></div><div class="a" style="left:715px;top:371px;width:8px;height:12px;background:#222"></div><div class="a" style="left:740px;top:371px;width:95px;height:12px;background:repeating-linear-gradient(90deg,#222 0 14px,transparent 14px 20px)"></div><div class="a" style="left:90px;top:392px;width:775px;height:31px;background:#D3E1CE"></div><div class="a" style="left:100px;top:402px;width:100px;height:12px;background:#2a2a2a;opacity:0.75"></div><div class="a" style="left:250px;top:402px;width:8px;height:12px;background:#222"></div><div class="a" style="left:275px;top:402px;width:95px;height:12px;background:repeating-linear-gradient(90deg,#222 0 14px,transparent 14px 20px)"></div><div class="a" style="left:400px;top:402px;width:8px;height:12px;background:#222"></div><div class="a" style="left:425px;top:402px;width:95px;height:12px;background:repeating-linear-gradient(90deg,#222 0 14px,transparent 14px 20px)"></div><div class="a" style="left:560px;top:402px;width:8px;height:12px;background:#222"></div><div class="a" style="left:585px;top:402px;width:95px;height:12px;background:repeating-linear-gradient(90deg,#222 0 14px,transparent 14px 20px)"></div><div class="a" style="left:715px;top:402px;width:8px;height:12px;background:#222"></div><div class="a" style="left:740px;top:402px;width:95px;height:12px;background:repeating-linear-gradient(90deg,#222 0 14px,transparent 14px 20px)"></div><div class="a" style="left:90px;top:423px;width:775px;height:31px;background:#E8EFE6"></div><div class="a" style="left:100px;top:433px;width:100px;height:12px;background:#2a2a2a;opacity:0.75"></div><div class="a" style="left:250px;top:433px;width:8px;height:12px;background:#222"></div><div class="a" style="left:275px;top:433px;width:95px;height:12px;background:repeating-linear-gradient(90deg,#222 0 14px,transparent 14px 20px)"></div><div class="a" style="left:400px;top:433px;width:8px;height:12px;background:#222"></div><div class="a" style="left:425px;top:433px;width:95px;height:12px;background:repeating-linear-gradient(90deg,#222 0 14px,transparent 14px 20px)"></div><div class="a" style="left:560px;top:433px;width:8px;height:12px;background:#222"></div><div class="a" style="left:585px;top:433px;width:95px;height:12px;background:repeating-linear-gradient(90deg,#222 0 14px,transparent 14px 20px)"></div><div class="a" style="left:715px;top:433px;width:8px;height:12px;background:#222"></div><div class="a" style="left:740px;top:433px;width:95px;height:12px;background:repeating-linear-gradient(90deg,#222 0 14px,transparent 14px 20px)"></div></div></div>
<div class="t" style="left:12.5px;top:579.7px;font-size:15px;color:#444">7</div>
<div class="a" style="left:35px;top:672px;width:126px;height:72px;background:#C6C6C6"></div>
<div class="a" style="left:36px;top:673px;width:124px;height:70px;background:#fff;overflow:hidden"><div class="a" style="left:0;top:0;width:960px;height:540px;transform:scale(0.12917);transform-origin:0 0"><svg style="left:0;top:0" width="960" height="540" viewBox="0 0 960 540">
<defs><radialGradient id="p1" gradientUnits="userSpaceOnUse" cx="300" cy="300" r="320" gradientTransform="translate(300 300) scale(0.7 1) translate(-300 -300)">
<stop offset="0" stop-color="#4F7C78"/><stop offset="1" stop-color="#2E4D3D"/></radialGradient></defs>
<path d="M46 43H366Q380 268 366 494H46Z" fill="url(#p1)"/>
<rect x="822" y="8" width="54" height="88" fill="#52A03A"/>
</svg>
<div class="a" style="left:100px;top:207px;width:143px;height:9px;background:#DDE0D8;opacity:0.7"></div><div class="a" style="left:100px;top:258px;width:100px;height:4px;background:#8BC34A;opacity:0.8"></div><div class="a" style="left:460px;top:116px;width:404px;height:357px;border:2px solid #ddd;background:repeating-linear-gradient(135deg,#fff 0 12px,#E6E6E6 12px 18px)"></div><div class="a" style="left:608px;top:136px;width:98px;height:8px;background:#555;opacity:0.7"></div><div class="a" style="left:497px;top:192px;width:320px;height:232px;border-radius:50%;background:#3E6B22"></div><div class="a" style="left:497px;top:166px;width:320px;height:232px;border-radius:50%;background:conic-gradient(#5BA646 0 22%,#8AB832 22% 58%,#C2D23E 58% 80%,#11987A 80% 100%)"></div><div class="a" style="left:530px;top:452px;width:290px;height:6px;background:repeating-linear-gradient(90deg,#8BC34A 0 60px,transparent 60px 80px);opacity:0.6"></div></div></div>
<div class="t" style="left:12.5px;top:669.7px;font-size:15px;color:#444">8</div>
<div class="a" style="left:1202px;top:165px;width:15px;height:550px;background:#DADADA"></div>
<div class="a" style="left:1202px;top:165px;width:15px;height:15px;background:#fff;border:1px solid #B0B0B0"></div>
<svg style="left:1206px;top:170px" width="7" height="4" viewBox="0 0 7 4"><path d="M0 4h7L3.5 0z" fill="#666"/></svg>
<div class="a" style="left:1202px;top:505px;width:15px;height:65px;background:#fff;border:1px solid #ABABAB"></div>
<div class="a" style="left:1202px;top:700px;width:15px;height:15px;background:#fff;border:1px solid #B0B0B0"></div>
<svg style="left:1206px;top:706px" width="7" height="4" viewBox="0 0 7 4"><path d="M0 0h7L3.5 4z" fill="#666"/></svg>
<svg style="left:1206px;top:720px" width="7" height="8" viewBox="0 0 7 8"><path d="M0 4h7L3.5 0zM0 8h7L3.5 4z" fill="#666"/></svg>
<svg style="left:1206px;top:738px" width="7" height="8" viewBox="0 0 7 8"><path d="M0 0h7L3.5 4zM0 4h7L3.5 8z" fill="#666"/></svg>
<div class="a" style="left:220px;top:195px;width:962px;height:542px;background:#fff;border:1px solid #C6C6C6;overflow:hidden">
<div class="a" style="left:0;top:0;width:960px;height:540px"><svg style="left:0;top:0" width="960" height="540" viewBox="0 0 960 540">
<defs>
<radialGradient id="g1" gradientUnits="userSpaceOnUse" cx="480" cy="175" r="520" gradientTransform="translate(480 175) scale(1 0.55) translate(-480 -175)">
<stop offset="0" stop-color="#4F7C78"/><stop offset="0.55" stop-color="#3C6658"/><stop offset="1" stop-color="#2D4B3B"/>
</radialGradient>
<radialGradient id="g2" gradientUnits="userSpaceOnUse" cx="690" cy="58" r="130">
<stop offset="0" stop-color="#3A6A5E" stop-opacity="0.8"/><stop offset="1" stop-color="#3A6A5E" stop-opacity="0"/>
</radialGradient>
<radialGradient id="g3" gradientUnits="userSpaceOnUse" cx="300" cy="-100" r="720">
<stop offset="0.62" stop-color="#2C4837" stop-opacity="0"/><stop offset="0.8" stop-color="#2C4837" stop-opacity="0.72"/><stop offset="1" stop-color="#2C4837" stop-opacity="0.9"/>
</radialGradient>
</defs>
<path d="M37.5 37H922V147Q479.75 209 37.5 147Z" fill="url(#g1)"/>
<path d="M37.5 37H922V147Q479.75 209 37.5 147Z" fill="url(#g2)"/>
<path d="M37.5 37H922V147Q479.75 209 37.5 147Z" fill="url(#g3)"/>
<path d="M922 120Q779 160 690 171Q809 160 922 147.5Z" fill="#5B7766"/>
<rect x="822" y="0" width="54" height="91" fill="#52A03A"/>
<path d="M822 91h54v1.5h-54z" fill="#2a3a2a" opacity="0.35"/>
</svg>
<div class="t" style="left:99px;top:87.1px;font-size:36px;color:#E6E0D2;letter-spacing:0.6px;-webkit-text-stroke:0.7px rgba(62,100,88,0.75)">Southwest Sales Table</div>
</div>
</div>
<div class="a" style="left:354px;top:433.5px;width:695px;height:1.5px;background:#8D8D8D"></div>
<div class="a" style="left:354.5px;top:435px;width:694px;height:46.5px;background:#668A55"></div>
<div class="a" style="left:354.5px;top:481.5px;width:694px;height:3.5px;background:#BABABA"></div>
<div class="a" style="left:354.5px;top:485px;width:694px;height:48.0px;background:#A0A79F"></div>
<div class="a" style="left:354.5px;top:533px;width:694px;height:51.7px;background:#ADB1AD"></div>
<div class="a" style="left:354.5px;top:533px;width:694px;height:1px;background:#B5B9B5"></div>
<div class="a" style="left:354.5px;top:584.7px;width:694px;height:49.3px;background:#A0A79F"></div>
<div class="a" style="left:354.5px;top:584.7px;width:694px;height:1px;background:#B5B9B5"></div>
<div class="a" style="left:354.5px;top:634px;width:694px;height:51.0px;background:#ADB1AD"></div>
<div class="a" style="left:354.5px;top:634px;width:694px;height:1px;background:#B5B9B5"></div>
<div class="a" style="left:492.5px;top:435px;width:1px;height:250px;background:#BFC2BF"></div>
<div class="a" style="left:631.4px;top:435px;width:1px;height:250px;background:#BFC2BF"></div>
<div class="a" style="left:770.3px;top:435px;width:1px;height:250px;background:#BFC2BF"></div>
<div class="a" style="left:909.3px;top:435px;width:1px;height:250px;background:#BFC2BF"></div>
<div class="a" style="left:354px;top:435px;width:1px;height:251px;background:#8D8D8D"></div>
<div class="a" style="left:1048.5px;top:435px;width:1px;height:251px;background:#8D8D8D"></div>
<div class="a" style="left:354px;top:685px;width:695px;height:1.5px;background:#8D8D8D"></div>
<div class="t" style="left:361.0px;top:441.1px;font-size:17.6px;font-weight:bold;color:#fff;letter-spacing:0.3px">States</div>
<div class="t" style="left:499.0px;top:441.1px;font-size:17.6px;font-weight:bold;color:#fff;letter-spacing:0.3px">July</div>
<div class="t" style="left:637.9px;top:441.1px;font-size:17.6px;font-weight:bold;color:#fff;letter-spacing:0.3px">August</div>
<div class="t" style="left:776.8px;top:441.1px;font-size:17.6px;font-weight:bold;color:#fff;letter-spacing:0.3px">September</div>
<div class="t" style="left:915.8px;top:441.1px;font-size:17.6px;font-weight:bold;color:#fff;letter-spacing:0.3px">Totals</div>
<div class="t" style="left:361px;top:489.8px;font-size:18px;color:#111;letter-spacing:0.9px;-webkit-text-stroke:0.45px rgba(166,171,165,0.7)">Arizona</div>
<div class="t" style="left:361px;top:539.8px;font-size:18px;color:#111;letter-spacing:0.9px;-webkit-text-stroke:0.45px rgba(166,171,165,0.7)">Colorado</div>
<div class="t" style="left:361px;top:590.5px;font-size:18px;color:#111;letter-spacing:0.9px;-webkit-text-stroke:0.45px rgba(166,171,165,0.7)">New Mexico</div>
<div class="t" style="left:361px;top:640.5px;font-size:18px;color:#111;letter-spacing:0.9px;-webkit-text-stroke:0.45px rgba(166,171,165,0.7)">Utah</div>
<svg style="left:348.5px;top:428.5px" width="12" height="12" viewBox="0 0 12 12"><circle cx="6" cy="6" r="4.6" fill="#fff" stroke="#979797" stroke-width="1.9"/></svg>
<svg style="left:695.5px;top:428.5px" width="12" height="12" viewBox="0 0 12 12"><circle cx="6" cy="6" r="4.6" fill="#fff" stroke="#979797" stroke-width="1.9"/></svg>
<svg style="left:1043.4px;top:428.5px" width="12" height="12" viewBox="0 0 12 12"><circle cx="6" cy="6" r="4.6" fill="#fff" stroke="#979797" stroke-width="1.9"/></svg>
<svg style="left:348.5px;top:554.5px" width="12" height="12" viewBox="0 0 12 12"><circle cx="6" cy="6" r="4.6" fill="#fff" stroke="#979797" stroke-width="1.9"/></svg>
<svg style="left:1043.4px;top:554.5px" width="12" height="12" viewBox="0 0 12 12"><circle cx="6" cy="6" r="4.6" fill="#fff" stroke="#979797" stroke-width="1.9"/></svg>
<svg style="left:348.5px;top:680px" width="12" height="12" viewBox="0 0 12 12"><circle cx="6" cy="6" r="4.6" fill="#fff" stroke="#979797" stroke-width="1.9"/></svg>
<svg style="left:695.5px;top:680px" width="12" height="12" viewBox="0 0 12 12"><circle cx="6" cy="6" r="4.6" fill="#fff" stroke="#979797" stroke-width="1.9"/></svg>
<svg style="left:1043.4px;top:680px" width="12" height="12" viewBox="0 0 12 12"><circle cx="6" cy="6" r="4.6" fill="#fff" stroke="#979797" stroke-width="1.9"/></svg>
<div class="a" style="left:338px;top:414px;width:733px;height:295.5px;border:5px solid #FC2769"></div>
<div class="a" style="left:199px;top:771px;width:1019px;height:1px;background:#C6C6C6"></div>
<div class="a" style="left:0;top:774px;width:1218px;height:22px;background:#F3F2F1;border-top:1px solid #D0D0D0"></div>
<div class="t" style="left:9.5px;top:778.5px;font-size:11.8px;color:#444">Slide 6 of 8</div>
<svg style="left:85px;top:778px" width="14" height="13" viewBox="0 0 14 13" fill="none" stroke="#444" stroke-width="1.1"><path d="M0.5 1h5.5l1 1 1-1h5.5v9H8.5l-1.5 1.5L5.5 10H0.5z"/><path d="M7 2v8"/><path d="M7.5 8.5l2 2 4-4" /></svg>
<svg style="left:783px;top:778px" width="14" height="13" viewBox="0 0 14 13" stroke="#444" stroke-width="1"><path d="M0 6.5h14M2 9.5h12M0 12.5h14M4 3l3-2.5 3 2.5" fill="none"/></svg>
<div class="t" style="left:800px;top:779.5px;font-size:11.3px;color:#444">Notes</div>
<div class="a" style="left:849.5px;top:775px;width:39px;height:21px;background:#C8C6C4"></div>
<svg style="left:862px;top:779px" width="15" height="14" viewBox="0 0 15 14" fill="none" stroke="#333" stroke-width="1"><rect x="0.5" y="0.5" width="14" height="12.5"/><path d="M3.5 0.5v9.5M0.5 10h14M7.5 4.5h3v2h-3z"/></svg>
<svg style="left:902px;top:778px" width="15" height="14" viewBox="0 0 15 14" fill="none" stroke="#444" stroke-width="1.1"><rect x="0.5" y="0.5" width="5.5" height="5"/><rect x="9" y="0.5" width="5.5" height="5"/><rect x="0.5" y="8.5" width="5.5" height="5"/><rect x="9" y="8.5" width="5.5" height="5"/></svg>
<svg style="left:942px;top:778px" width="14" height="13" viewBox="0 0 14 13" fill="none" stroke="#444" stroke-width="1.1"><path d="M0.5 0.5h5.5l1 1 1-1h5.5v12H8l-1 -1-1 1H0.5z M7 1.5v10M2.5 3.5h3M2.5 6h3M2.5 8.5h3M8.5 3.5h3M8.5 6h3M8.5 8.5h3"/></svg>
<svg style="left:982px;top:778px" width="13" height="14" viewBox="0 0 13 14" fill="none" stroke="#444" stroke-width="1.1"><path d="M0 0.5h13M1 0.5v7h11v-7M6.5 7.5v5.5M3.5 13h6M4 3h5"/></svg>
<div class="a" style="left:1016px;top:784px;width:7px;height:1px;background:#444"></div>
<div class="a" style="left:1028px;top:784px;width:100px;height:1px;background:#A0A0A0"></div>
<div class="a" style="left:1078px;top:781px;width:1px;height:6px;background:#A0A0A0"></div>
<div class="a" style="left:1063px;top:779px;width:5px;height:11px;background:#777"></div>
<div class="a" style="left:1133px;top:784px;width:8px;height:1px;background:#444"></div>
<div class="a" style="left:1136.5px;top:780.5px;width:1px;height:8px;background:#444"></div>
<div class="t" style="left:1153.5px;top:779px;font-size:11.3px;color:#444">76%</div>
<svg style="left:1187px;top:777px" width="15" height="15" viewBox="0 0 15 15" fill="none" stroke="#444" stroke-width="1.1"><rect x="4" y="4.5" width="7" height="6"/><path d="M2.5 5L0.5 7.5 2.5 10M12.5 5l2 2.5-2 2.5M5 2.5L7.5 0.5 10 2.5M5 12.5l2.5 2 2.5-2"/></svg>
</div>
<div class="a" style="left:0;top:1px;width:1px;height:798px;background:#B7472A;z-index:9"></div>
<div class="a" style="left:0;top:796px;width:1218px;height:1px;background:#B7472A;z-index:9"></div>
<div class="a" style="left:0;top:797px;width:1218px;height:2px;background:#8A9298;z-index:9"></div>
</body></html>
